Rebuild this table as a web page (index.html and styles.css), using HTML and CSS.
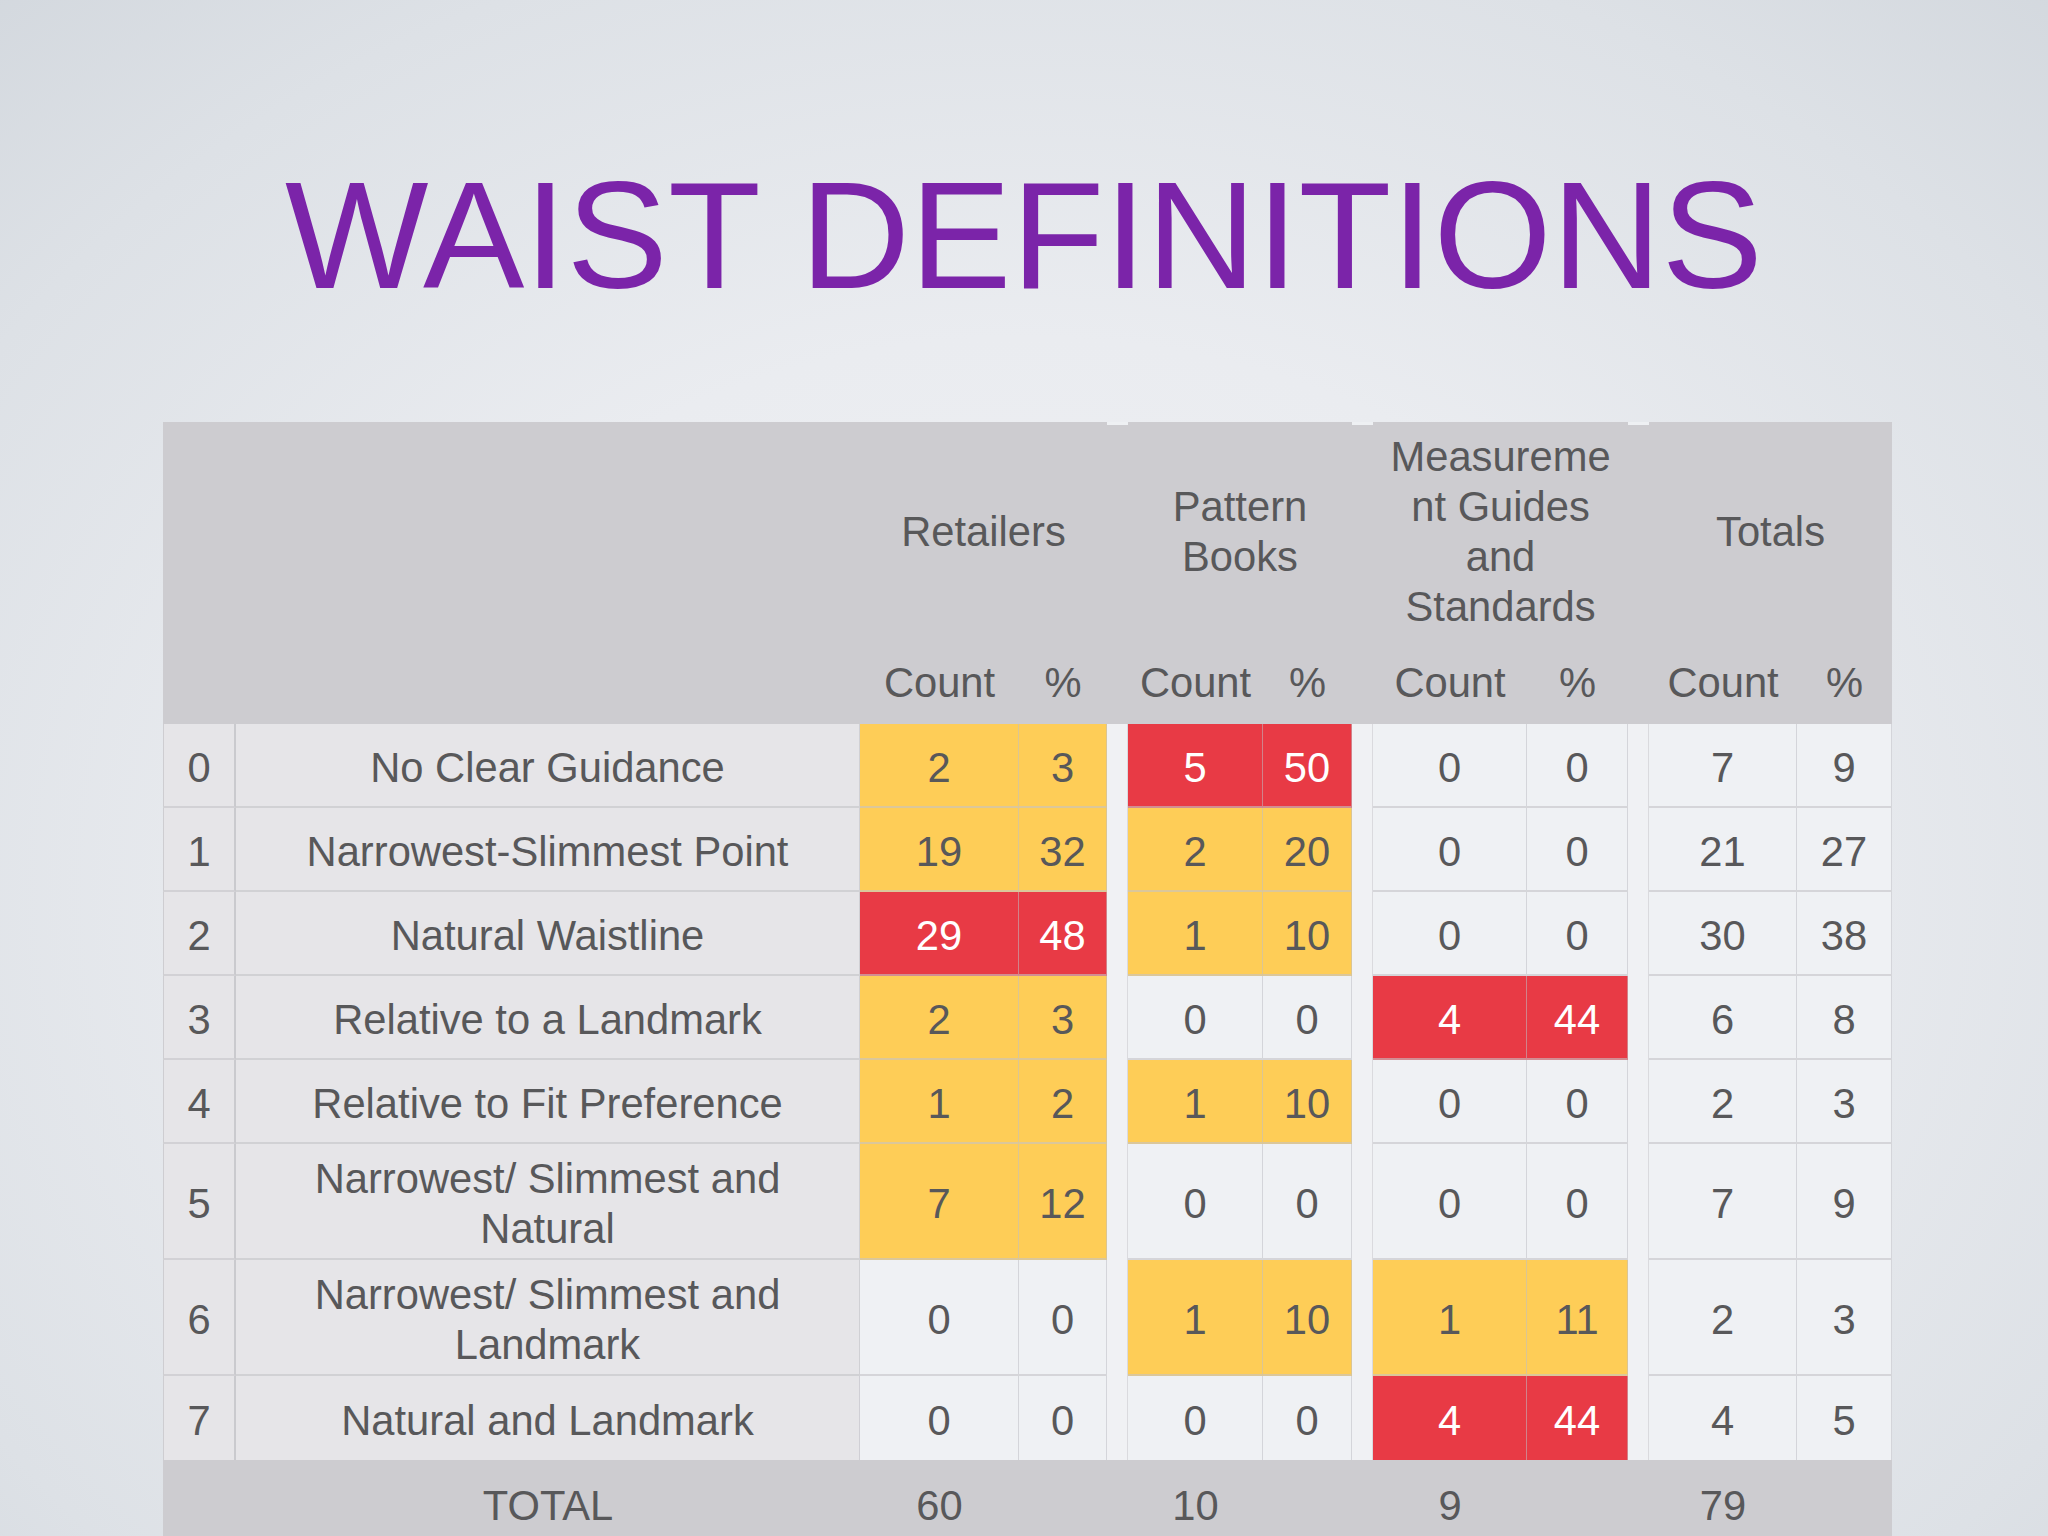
FILE: index.html
```html
<!DOCTYPE html>
<html lang="en">
<head>
<meta charset="utf-8">
<title>Waist Definitions</title>
<link rel="stylesheet" href="styles.css">
</head>
<body>
<main class="slide">
  <h1 class="title">WAIST DEFINITIONS</h1>
  <table class="grid">
    <colgroup>
      <col class="c-idx"><col class="c-label">
      <col class="c-rc"><col class="c-rp"><col class="c-gap">
      <col class="c-pc"><col class="c-pp"><col class="c-gap">
      <col class="c-mc"><col class="c-mp"><col class="c-gap">
      <col class="c-tc"><col class="c-tp">
    </colgroup>
    <thead>
      <tr class="h-groups">
        <th rowspan="2"></th>
        <th rowspan="2"></th>
        <th colspan="2" class="group">Retailers</th>
        <th rowspan="2" class="hgap"></th>
        <th colspan="2" class="group">Pattern Books</th>
        <th rowspan="2" class="hgap"></th>
        <th colspan="2" class="group">Measurement Guides and Standards</th>
        <th rowspan="2" class="hgap"></th>
        <th colspan="2" class="group">Totals</th>
      </tr>
      <tr class="h-sub">
        <th>Count</th><th>%</th>
        <th>Count</th><th>%</th>
        <th>Count</th><th>%</th>
        <th>Count</th><th>%</th>
      </tr>
    </thead>
    <tbody>
      <tr class="row">
        <td class="idx">0</td><td class="label">No Clear Guidance</td>
        <td class="yel">2</td><td class="yel">3</td><td class="gap"></td>
        <td class="red">5</td><td class="red">50</td><td class="gap"></td>
        <td class="wht">0</td><td class="wht">0</td><td class="gap"></td>
        <td class="wht">7</td><td class="wht">9</td>
      </tr>
      <tr class="row">
        <td class="idx">1</td><td class="label">Narrowest-Slimmest Point</td>
        <td class="yel">19</td><td class="yel">32</td><td class="gap"></td>
        <td class="yel">2</td><td class="yel">20</td><td class="gap"></td>
        <td class="wht">0</td><td class="wht">0</td><td class="gap"></td>
        <td class="wht">21</td><td class="wht">27</td>
      </tr>
      <tr class="row">
        <td class="idx">2</td><td class="label">Natural Waistline</td>
        <td class="red">29</td><td class="red">48</td><td class="gap"></td>
        <td class="yel">1</td><td class="yel">10</td><td class="gap"></td>
        <td class="wht">0</td><td class="wht">0</td><td class="gap"></td>
        <td class="wht">30</td><td class="wht">38</td>
      </tr>
      <tr class="row">
        <td class="idx">3</td><td class="label">Relative to a Landmark</td>
        <td class="yel">2</td><td class="yel">3</td><td class="gap"></td>
        <td class="wht">0</td><td class="wht">0</td><td class="gap"></td>
        <td class="red">4</td><td class="red">44</td><td class="gap"></td>
        <td class="wht">6</td><td class="wht">8</td>
      </tr>
      <tr class="row">
        <td class="idx">4</td><td class="label">Relative to Fit Preference</td>
        <td class="yel">1</td><td class="yel">2</td><td class="gap"></td>
        <td class="yel">1</td><td class="yel">10</td><td class="gap"></td>
        <td class="wht">0</td><td class="wht">0</td><td class="gap"></td>
        <td class="wht">2</td><td class="wht">3</td>
      </tr>
      <tr class="row tall">
        <td class="idx">5</td><td class="label">Narrowest/ Slimmest and Natural</td>
        <td class="yel">7</td><td class="yel">12</td><td class="gap"></td>
        <td class="wht">0</td><td class="wht">0</td><td class="gap"></td>
        <td class="wht">0</td><td class="wht">0</td><td class="gap"></td>
        <td class="wht">7</td><td class="wht">9</td>
      </tr>
      <tr class="row tall">
        <td class="idx">6</td><td class="label">Narrowest/ Slimmest and Landmark</td>
        <td class="wht">0</td><td class="wht">0</td><td class="gap"></td>
        <td class="yel">1</td><td class="yel">10</td><td class="gap"></td>
        <td class="yel">1</td><td class="yel">11</td><td class="gap"></td>
        <td class="wht">2</td><td class="wht">3</td>
      </tr>
      <tr class="row last">
        <td class="idx">7</td><td class="label">Natural and Landmark</td>
        <td class="wht">0</td><td class="wht">0</td><td class="gap"></td>
        <td class="wht">0</td><td class="wht">0</td><td class="gap"></td>
        <td class="red">4</td><td class="red">44</td><td class="gap"></td>
        <td class="wht">4</td><td class="wht">5</td>
      </tr>
    </tbody>
    <tfoot>
      <tr class="total">
        <td></td><td>TOTAL</td>
        <td>60</td><td></td><td></td>
        <td>10</td><td></td><td></td>
        <td>9</td><td></td><td></td>
        <td>79</td><td></td>
      </tr>
    </tfoot>
  </table>
</main>
</body>
</html>
```

FILE: styles.css
```css
html, body {
  margin: 0;
  padding: 0;
}

body {
  width: 2048px;
  height: 1536px;
  overflow: hidden;
  font-family: "Liberation Sans", Arial, sans-serif;
  background: radial-gradient(ellipse 75% 80% at 50% 58%, #f1f2f5 0%, #eaecf0 45%, #dde1e6 80%, #d3d8de 100%);
}

.slide {
  width: 2048px;
  height: 1536px;
  box-sizing: border-box;
  padding-top: 159px;
  overflow: hidden;
}

.title {
  margin: 0;
  font-size: 152px;
  line-height: 153px;
  font-weight: normal;
  text-align: center;
  color: #7b24a9;
  letter-spacing: 0;
}

.grid {
  margin: 110px 0 0 163px;
  width: 1729px;
  table-layout: fixed;
  border-collapse: separate;
  border-spacing: 0;
  font-size: 41.7px;
  color: #58585a;
}

.c-idx { width: 73px; }
.c-label { width: 624px; }
.c-rc { width: 159px; }
.c-rp { width: 88px; }
.c-gap { width: 21px; }
.c-pc { width: 135px; }
.c-pp { width: 89px; }
.c-mc { width: 154px; }
.c-mp { width: 101px; }
.c-tc { width: 148px; }
.c-tp { width: 95px; }

.grid th {
  background: #cdccd0;
  font-weight: normal;
  padding: 2px 0 0;
  text-align: center;
  vertical-align: middle;
}

.h-groups { height: 218px; }
.h-sub { height: 84px; }

.grid th.group {
  padding: 2px 14px 0;
  line-height: 50px;
  overflow-wrap: anywhere;
}

.grid th.hgap {
  border-top: 3px solid #eef0f3;
}

.h-sub th {
  line-height: 50px;
}

.row { height: 84px; }
.row.tall { height: 116px; }

.row td {
  padding: 6px 0 0;
  text-align: center;
  vertical-align: middle;
  line-height: 50px;
  border-bottom: 2px solid rgba(196, 196, 200, 0.6);
  border-right: 1px solid rgba(190, 190, 196, 0.55);
}

.row.last td {
  border-bottom: none;
}

.row td.idx {
  background: #e6e5e8;
  border-right: 2px solid rgba(196, 196, 200, 0.8);
  border-left: 1px solid rgba(196, 196, 200, 0.7);
}

.row td.label {
  background: #e6e5e8;
  padding: 6px 20px 0;
}

.row td.wht { background: #eff1f4; }
.row td.yel { background: #fecd57; }
.row td.red { background: #e83a45; color: #ffffff; }

.row td.gap {
  background: #f0f1f4;
  border-bottom: none;
  border-right: 1px solid rgba(190, 190, 196, 0.45);
}

.total { height: 92px; }

.total td {
  background: #cdccd0;
  padding: 0;
  text-align: center;
  vertical-align: middle;
}
```
